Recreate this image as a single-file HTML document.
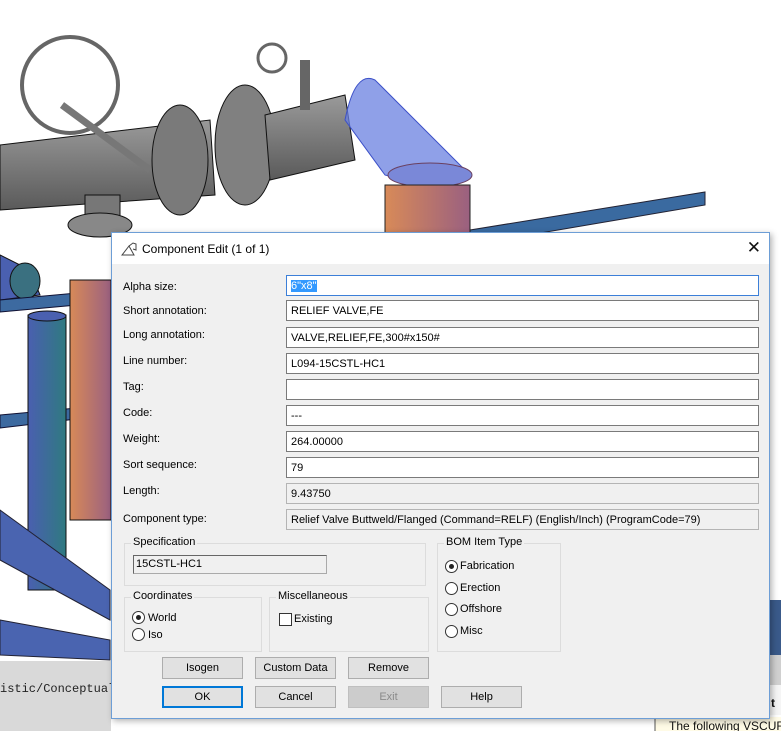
<!DOCTYPE html>
<html><head><meta charset="utf-8"><style>
body{margin:0;width:781px;height:731px;overflow:hidden;background:#fff;font-family:"Liberation Sans",Arial,sans-serif;font-size:11px;position:relative}
#bg{position:absolute;left:0;top:0}
.dlg{position:absolute;left:111px;top:232px;width:657px;height:485px;background:#f0f0f0;border:1px solid #6d9ed6;box-shadow:2px 2px 6px rgba(0,0,0,.3)}
.title{position:absolute;left:0;top:0;width:657px;height:31px;background:#fff}
.title span{position:absolute;left:30px;top:9px;font-size:12px;color:#000}
.close{position:absolute;right:8px;top:5px;font-size:17px;color:#111}
.lbl{position:absolute;left:11px;color:#000}
.inp{position:absolute;left:174px;width:467px;height:19px;background:#fff;border:1px solid #7a7a7a;line-height:21px;padding-left:4px;box-sizing:content-box}
.ro{background:#f0f0f0;border-color:#b4b4b4}
.grp{position:absolute;border:1px solid #dcdcdc}
.grp .gt{position:absolute;top:-8px;left:6px;background:#f0f0f0;padding:0 2px}
.rad{position:absolute;width:11px;height:11px;border:1px solid #333;border-radius:50%;background:#fff}
.rad.on::after{content:"";position:absolute;left:3px;top:3px;width:5px;height:5px;border-radius:50%;background:#222}
.btn{position:absolute;width:79px;height:20px;background:#e1e1e1;border:1px solid #adadad;text-align:center;line-height:20px}
</style></head><body>
<svg id="bg" width="781" height="731">
<defs>
<linearGradient id="gp" x1="0" y1="0" x2="0" y2="1"><stop offset="0" stop-color="#9a9a9a"/><stop offset=".5" stop-color="#7a7a7a"/><stop offset="1" stop-color="#5a5a5a"/></linearGradient>
<linearGradient id="bl" x1="0" y1="0" x2="1" y2="0"><stop offset="0" stop-color="#4a5fb0"/><stop offset="1" stop-color="#2f7a80"/></linearGradient>
<linearGradient id="or" x1="0" y1="0" x2="1" y2="0"><stop offset="0" stop-color="#d88a58"/><stop offset="1" stop-color="#9a6080"/></linearGradient>
</defs>
<polygon points="470,230 705,192 705,205 470,245" fill="#3a6aa0" stroke="#223" stroke-width="1"/>
<polygon points="0,145 210,120 215,195 0,210" fill="url(#gp)" stroke="#111"/>
<circle cx="70" cy="85" r="48" fill="none" stroke="#666" stroke-width="4"/>
<line x1="62" y1="105" x2="150" y2="170" stroke="#777" stroke-width="7"/>
<ellipse cx="180" cy="160" rx="28" ry="55" fill="#7a7a7a" stroke="#111"/>
<ellipse cx="245" cy="145" rx="30" ry="60" fill="#808080" stroke="#111"/>
<polygon points="265,115 345,95 355,160 270,180" fill="url(#gp)" stroke="#111"/>
<circle cx="272" cy="58" r="14" fill="none" stroke="#666" stroke-width="3"/>
<rect x="300" y="60" width="10" height="50" fill="#666"/>
<rect x="85" y="195" width="35" height="25" fill="#777" stroke="#111"/>
<ellipse cx="100" cy="225" rx="32" ry="12" fill="#888" stroke="#111"/>
<path d="M345,120 Q355,70 375,80 L470,175 Q440,190 385,175 Z" fill="#6a80e0" fill-opacity=".75" stroke="#3c50c8"/>
<ellipse cx="430" cy="175" rx="42" ry="12" fill="#7a88d8" stroke="#6a4060"/>
<rect x="385" y="185" width="85" height="50" fill="url(#or)" stroke="#222"/>
<polygon points="0,255 30,270 40,295 0,300" fill="#4a60b0" stroke="#111"/>
<ellipse cx="25" cy="281" rx="15" ry="18" fill="#3a7080" stroke="#111"/>
<polygon points="0,300 110,290 110,302 0,312" fill="#3d6aa0" stroke="#113"/>
<polygon points="0,415 110,405 110,415 0,428" fill="#3d6aa0" stroke="#113"/>
<rect x="70" y="280" width="41" height="240" fill="url(#or)" stroke="#111"/>
<rect x="28" y="315" width="38" height="275" fill="url(#bl)" stroke="#111"/>
<ellipse cx="47" cy="316" rx="19" ry="5" fill="#4a60b0" stroke="#111"/>
<polygon points="0,510 110,590 110,620 0,560" fill="#4a64b0" stroke="#223"/>
<polygon points="0,620 110,640 110,660 0,655" fill="#4a64b0" stroke="#223"/>
<rect x="769" y="600" width="12" height="55" fill="#3a5a8a"/>
<rect x="769" y="655" width="12" height="30" fill="#d0d0d0"/>
<rect x="0" y="661" width="111" height="70" fill="#d9d9d9"/>
<rect x="769" y="685" width="12" height="30" fill="#f5f5f5"/>
<rect x="655" y="717" width="126" height="14" fill="#fffbe6"/>
<line x1="655" y1="717" x2="655" y2="731" stroke="#555"/>
<text x="0" y="692" font-family="Liberation Mono" font-size="12" fill="#222">istic/Conceptual</text>
<text x="669" y="730" font-family="Liberation Sans" font-size="12" fill="#111">The following VSCUR</text>
<text x="771" y="707" font-family="Liberation Sans" font-size="12" font-weight="bold" fill="#111">t</text>
</svg>

<div class="dlg">
<div class="title"><svg style="position:absolute;left:9px;top:9px" width="16" height="14"><path d="M1,13 L8,4 L13,13 Z M8,4 L12,1 L15,2 L15,8 L12,7" fill="none" stroke="#444"/></svg><span>Component Edit (1 of 1)</span><div class="close">✕</div></div>

<div class="lbl" style="top:48px">Alpha size:</div>
<div class="inp" style="top:42px;border-color:#3c7fd8"><span style="background:#3399ff;color:#fff">6"x8"</span></div>
<div class="lbl" style="top:72px">Short annotation:</div>
<div class="inp" style="top:67px">RELIEF VALVE,FE</div>
<div class="lbl" style="top:96px">Long annotation:</div>
<div class="inp" style="top:94px">VALVE,RELIEF,FE,300#x150#</div>
<div class="lbl" style="top:122px">Line number:</div>
<div class="inp" style="top:120px">L094-15CSTL-HC1</div>
<div class="lbl" style="top:148px">Tag:</div>
<div class="inp" style="top:146px"></div>
<div class="lbl" style="top:174px">Code:</div>
<div class="inp" style="top:172px">---</div>
<div class="lbl" style="top:200px">Weight:</div>
<div class="inp" style="top:198px">264.00000</div>
<div class="lbl" style="top:226px">Sort sequence:</div>
<div class="inp" style="top:224px">79</div>
<div class="lbl" style="top:252px">Length:</div>
<div class="inp ro" style="top:250px">9.43750</div>
<div class="lbl" style="top:280px">Component type:</div>
<div class="inp ro" style="top:276px">Relief Valve Buttweld/Flanged (Command=RELF) (English/Inch) (ProgramCode=79)</div>

<div class="grp" style="left:12px;top:310px;width:300px;height:41px"><span class="gt">Specification</span>
<div style="position:absolute;left:8px;top:11px;width:190px;height:17px;border:1px solid #aaa;border-top-color:#666;border-left-color:#666;line-height:17px;padding-left:2px">15CSTL-HC1</div></div>
<div class="grp" style="left:325px;top:310px;width:122px;height:107px"><span class="gt">BOM Item Type</span>
<div class="rad on" style="left:7px;top:16px"></div><span style="position:absolute;left:22px;top:16px">Fabrication</span>
<div class="rad" style="left:7px;top:38px"></div><span style="position:absolute;left:22px;top:38px">Erection</span>
<div class="rad" style="left:7px;top:59px"></div><span style="position:absolute;left:22px;top:59px">Offshore</span>
<div class="rad" style="left:7px;top:81px"></div><span style="position:absolute;left:22px;top:81px">Misc</span></div>
<div class="grp" style="left:12px;top:364px;width:136px;height:53px"><span class="gt">Coordinates</span>
<div class="rad on" style="left:7px;top:13px"></div><span style="position:absolute;left:23px;top:14px">World</span>
<div class="rad" style="left:7px;top:30px"></div><span style="position:absolute;left:23px;top:31px">Iso</span></div>
<div class="grp" style="left:157px;top:364px;width:158px;height:53px"><span class="gt">Miscellaneous</span>
<div style="position:absolute;left:9px;top:15px;width:11px;height:11px;border:1px solid #333;background:#fff"></div><span style="position:absolute;left:24px;top:15px">Existing</span></div>

<div class="btn" style="left:50px;top:424px">Isogen</div>
<div class="btn" style="left:143px;top:424px">Custom Data</div>
<div class="btn" style="left:236px;top:424px">Remove</div>
<div class="btn" style="left:50px;top:453px;border:2px solid #0078d7;width:77px;height:18px;line-height:18px">OK</div>
<div class="btn" style="left:143px;top:453px">Cancel</div>
<div class="btn" style="left:236px;top:453px;background:#ccc;border-color:#bfbfbf;color:#8a8a8a">Exit</div>
<div class="btn" style="left:329px;top:453px">Help</div>
</div>
</body></html>
